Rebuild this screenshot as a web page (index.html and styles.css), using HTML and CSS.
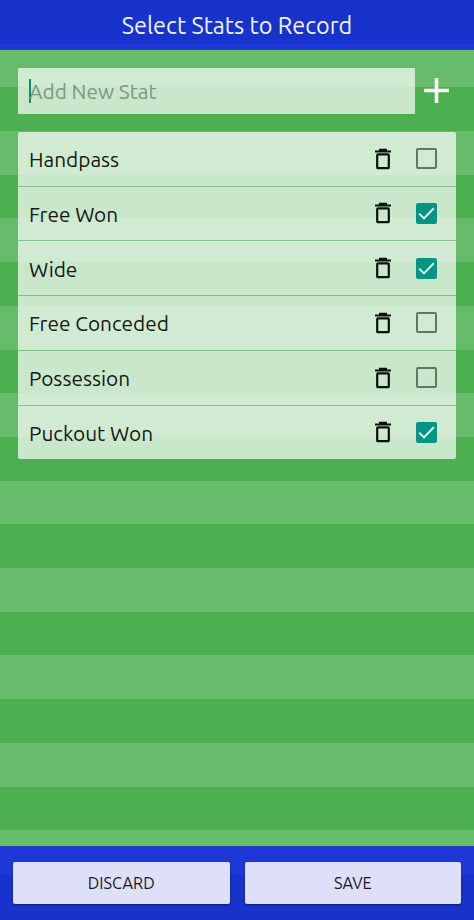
FILE: index.html
```
<!DOCTYPE html>
<html lang="en">
<head>
  <meta charset="utf-8">
  <title>Select Stats to Record</title>
  <link rel="stylesheet" href="styles.css">
</head>

<body>
  <!-- shared icons -->
  <svg class="sprites" width="0" height="0">
    <symbol id="trash" viewBox="0 0 18 22">
      <path d="M1 3.4h16M5 1.7h8" fill="none" stroke="currentColor" stroke-width="2"/>
      <rect x="3.2" y="6.4" width="11.6" height="13.8" rx="0.8" fill="none" stroke="currentColor" stroke-width="2.2"/>
    </symbol>
    <symbol id="check" viewBox="0 0 21 21">
      <path d="M3.2 10.6l4.8 4.8L17.8 5.3" fill="none" stroke="currentColor" stroke-width="2"/>
    </symbol>
  </svg>

  <header class="header">
    <h1 class="title">Select Stats to Record</h1>
  </header>

  <main class="content">
    <div class="add-stat">
      <div class="add-field"><span class="caret"></span><span class="placeholder">Add New Stat</span></div>
      <svg class="plus" viewBox="0 0 25 25"><path d="M12.5 0v25M0 12.5h25" stroke="#fff" stroke-width="3.6"/></svg>
    </div>

    <ul class="stats">
      <li class="stat"><span class="name">Handpass</span><svg class="trash"><use href="#trash"/></svg><span class="box"></span></li>
      <li class="stat"><span class="name">Free Won</span><svg class="trash"><use href="#trash"/></svg><span class="box checked"><svg><use href="#check"/></svg></span></li>
      <li class="stat"><span class="name">Wide</span><svg class="trash"><use href="#trash"/></svg><span class="box checked"><svg><use href="#check"/></svg></span></li>
      <li class="stat"><span class="name">Free Conceded</span><svg class="trash"><use href="#trash"/></svg><span class="box"></span></li>
      <li class="stat"><span class="name">Possession</span><svg class="trash"><use href="#trash"/></svg><span class="box"></span></li>
      <li class="stat"><span class="name">Puckout Won</span><svg class="trash"><use href="#trash"/></svg><span class="box checked"><svg><use href="#check"/></svg></span></li>
    </ul>
  </main>

  <footer class="footer">
    <button class="btn">DISCARD</button>
    <button class="btn">SAVE</button>
  </footer>
</body>

</html>
```

FILE: styles.css
```
* {
  box-sizing: border-box;
}

body {
  margin: 0;
  height: 920px;
  display: flex;
  flex-direction: column;
  font-family: Ubuntu, "Noto Sans", sans-serif;
  color: #141a15;
  /* mown pitch stripes */
  background: repeating-linear-gradient(#4caf50 0, #4caf50 43.7px, #66bc6b 43.7px, #66bc6b 87.4px);
}

.sprites {
  position: absolute;
}

.header {
  height: 50px;
  display: flex;
  justify-content: center;
  background: linear-gradient(#1833cb 44px, #1d38d7 44px);
  border-bottom: 1px solid #2141b4;
}

.title {
  margin: 0;
  font-size: 23.4px;
  font-weight: 400;
  line-height: 51px;
  color: #f1f3fe;
}

.content {
  flex: 1;
  padding: 17.5px 18px 0 17.5px;
}

.add-stat {
  display: flex;
  align-items: center;
  gap: 9px;
}

.add-field {
  width: 397.5px;
  height: 46.5px;
  padding-left: 11px;
  display: flex;
  align-items: center;
  background: rgba(255, 255, 255, 0.7);
  border-radius: 1px;
}

.caret {
  width: 2px;
  height: 24px;
  margin-right: -1.5px;
  background: #128a78;
}

.placeholder {
  padding-top: 1px;
  font-size: 20.8px;
  color: #7c987e;
}

.plus {
  width: 25px;
  height: 25px;
}

.stats {
  list-style: none;
  margin: 17.8px 0 0;
  padding: 0;
  border-radius: 2px;
  overflow: hidden;
}

.stat {
  height: 54.75px;
  padding: 0 19px 0 11.5px;
  display: flex;
  align-items: center;
  background: rgba(255, 255, 255, 0.7);
  border-bottom: 1.5px solid rgba(76, 155, 80, 0.55);
}

.stat:last-child {
  height: 53.75px;
  border-bottom: none;
}

.name {
  flex: 1;
  padding-top: 3px;
  font-size: 20.8px;
  line-height: 28px;
}

.trash {
  width: 18px;
  height: 22px;
  margin-right: 24px;
  color: #0b100c;
}

.box {
  width: 21px;
  height: 21px;
  border: 2px solid #5f7862;
  border-radius: 2px;
}

.box.checked {
  border: none;
  background: #069485;
  color: #e2f7f2;
}

.box svg {
  display: block;
  width: 21px;
  height: 21px;
}

.footer {
  height: 74px;
  padding: 15px 13px 0;
  display: flex;
  gap: 15px;
  background: linear-gradient(#1d38d7 28px, #1833cb 28px);
  border-top: 1px solid #2141b4;
}

.btn {
  flex: 1;
  height: 42px;
  padding: 0;
  border: none;
  border-radius: 2px;
  background: #dde0f6;
  box-shadow: 0 1px 2px rgba(0, 0, 30, 0.5);
  font-family: inherit;
  font-size: 16.3px;
  color: #17181f;
}
```
